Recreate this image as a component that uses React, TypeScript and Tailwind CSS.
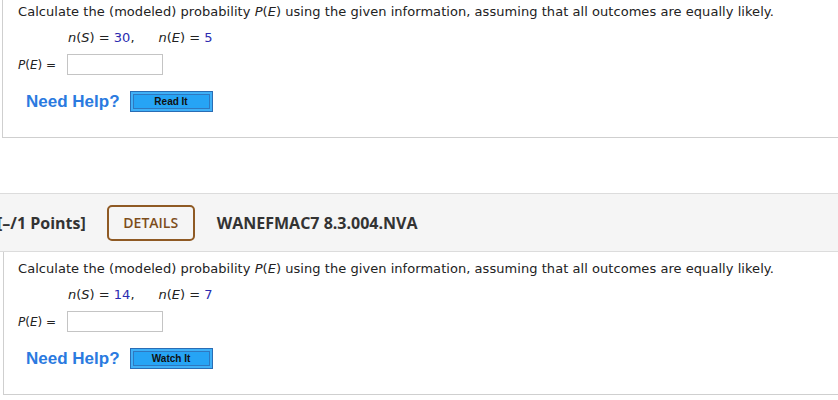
import React from "react";

const V = { fontFamily: '"DejaVu Sans", Verdana, sans-serif' };
const A = { fontFamily: '"Liberation Sans", Arial, sans-serif' };
const O = { fontFamily: '"Open Sans", sans-serif' };

function HelpButton({ label }: { label: string }) {
  return (
    <div className="flex h-[21px] w-[83px] items-center justify-center border border-[#2a6db5] bg-[#3fb0f7] p-[2px]">
      <div
        className="flex h-full w-full items-center justify-center border border-[#2f78c0] bg-[#26a4f5] text-[10px] font-bold text-[#111]"
        style={A}
      >
        {label}
      </div>
    </div>
  );
}

function Question({ s, e, btn }: { s: string; e: string; btn: string }) {
  return (
    <div className="flex flex-col text-[13px] text-[#222]" style={V}>
      <div className="h-[16px] leading-[16px] tracking-[0.05px]">
        Calculate the (modeled) probability <i>P</i>(<i>E</i>) using the given information, assuming that all outcomes are equally likely.
      </div>
      <div className="mt-[10px] flex h-[16px] pl-[50px] leading-[16px]">
        <span>
          <i>n</i>(<i>S</i>) = <span className="text-[#2b2bb0]">{s}</span>,
        </span>
        <span className="ml-[24px]">
          <i>n</i>(<i>E</i>) = <span className="text-[#2b2bb0]">{e}</span>
        </span>
      </div>
      <div className="mt-[8px] flex items-center gap-[11px]">
        <span className="text-[12px]">
          <i>P</i>(<i>E</i>) =
        </span>
        <div className="h-[21px] w-[96px] border border-[#c4c4c4] bg-white" />
      </div>
      <div className="mt-[14px] flex items-center gap-[10px] pl-[8px]">
        <span className="text-[17px] font-bold text-[#2a7ae0]" style={A}>
          Need Help?
        </span>
        <HelpButton label={btn} />
      </div>
    </div>
  );
}

export default function App() {
  return (
    <div className="h-[400px] w-[838px] overflow-hidden bg-white">
      <div className="ml-[2px] h-[138px] border-b border-l border-[#cfcfcf] pl-[15px] pt-[4px]">
        <Question s="30" e="5" btn="Read It" />
      </div>
      <div className="h-[55px]" />
      <div
        className="flex h-[59px] items-center border-y border-[#dcdcdc] bg-[#f5f5f5] text-[16px] font-bold text-[#333]"
        style={O}
      >
        <span className="-ml-[3px]">[–/1 Points]</span>
        <div className="ml-[21px] flex h-[36px] w-[88px] items-center justify-center rounded-[5px] border-2 border-[#8f5a24] text-[14px] font-semibold text-[#7d4d1c]">
          DETAILS
        </div>
        <span className="ml-[22px]">WANEFMAC7 8.3.004.NVA</span>
      </div>
      <div className="ml-[3px] h-[143px] border-b border-l border-[#cfcfcf] pl-[14px] pt-[9px]">
        <Question s="14" e="7" btn="Watch It" />
      </div>
    </div>
  );
}
